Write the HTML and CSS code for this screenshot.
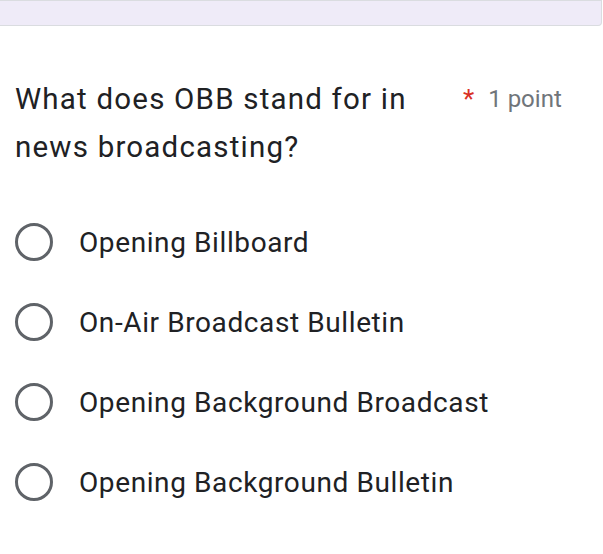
FILE: index.html
```html
<!DOCTYPE html>
<html>
<head>
<meta charset="utf-8">
<link rel="stylesheet" href="styles.css">
</head>
<body>
<div class="topbar"></div>
<div class="question">
  <div class="title">What does OBB stand for in news broadcasting?</div>
  <div class="meta"><span class="req">*</span><span class="points">1 point</span></div>
</div>
<div class="options">
  <div class="option"><span class="radio"></span><span class="label">Opening Billboard</span></div>
  <div class="option"><span class="radio"></span><span class="label">On-Air Broadcast Bulletin</span></div>
  <div class="option"><span class="radio"></span><span class="label">Opening Background Broadcast</span></div>
  <div class="option"><span class="radio"></span><span class="label">Opening Background Bulletin</span></div>
</div>
</body>
</html>
```
FILE: styles.css
```css
html, body {
  margin: 0;
  padding: 0;
  background: #ffffff;
  font-family: Roboto, "Noto Sans", sans-serif;
  color: #202124;
}
.topbar {
  height: 24px;
  width: 601px;
  background: #efebf8;
  border-top: 1px solid #dadce0;
  border-bottom: 1px solid #dadce0;
  border-right: 1px solid #dadce0;
  border-bottom-right-radius: 4px;
  box-sizing: content-box;
}
.question {
  display: flex;
  align-items: flex-start;
  padding: 49px 0 0 15px;
}
.title {
  width: 430px;
  font-size: 29.5px;
  line-height: 48px;
  letter-spacing: 1.2px;
}
.meta {
  display: flex;
  align-items: flex-start;
  margin-left: 18px;
  padding-top: 11px;
}
.req {
  color: #d93025;
  font-size: 26px;
  line-height: 26px;
  margin-right: 14px;
}
.points {
  color: #70757a;
  font-size: 24px;
  line-height: 26px;
}
.options {
  display: flex;
  flex-direction: column;
  padding: 31px 0 0 15px;
}
.option {
  display: flex;
  align-items: center;
  height: 80px;
}
.radio {
  width: 32px;
  height: 32px;
  border: 3.5px solid #5f6368;
  border-radius: 50%;
  flex: none;
}
.label {
  margin-left: 26px;
  font-size: 28px;
  letter-spacing: 0.6px;
}
```
